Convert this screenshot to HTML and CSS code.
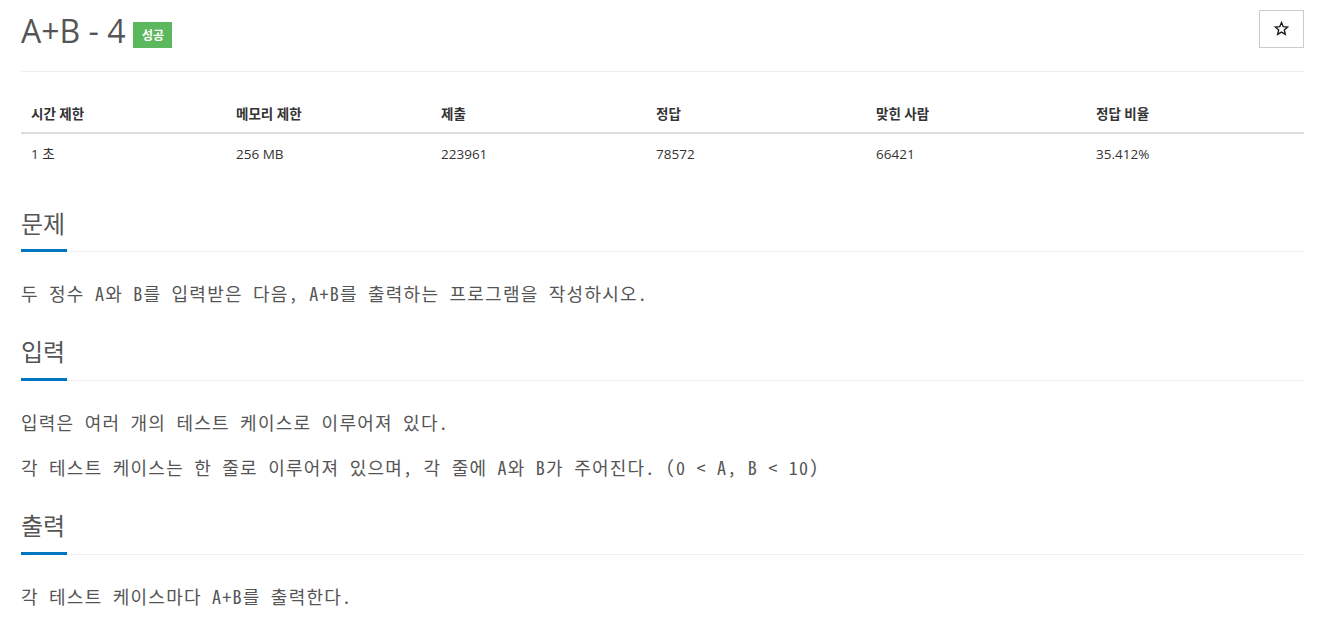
FILE: index.html
```html
<!DOCTYPE html>
<html lang="ko">
<head>
<meta charset="utf-8">
<title>A+B - 4</title>
<link rel="stylesheet" href="styles.css">
</head>
<body>
<div class="container">
  <div class="page-header">
    <h1 class="title"><span class="title-text">A+B - 4</span><span class="badge">성공</span></h1>
    <button class="star-btn" type="button" aria-label="즐겨찾기">
      <svg class="star-icon" width="15" height="15" viewBox="0 0 24 24"><path d="M12 2.5l2.8 6.6 7.1.6-5.4 4.7 1.6 7-6.1-3.7-6.1 3.7 1.6-7-5.4-4.7 7.1-.6z" fill="none" stroke="#1a1a1a" stroke-width="2.2" stroke-linejoin="miter"/></svg>
    </button>
  </div>

  <table class="info">
    <thead>
      <tr>
        <th class="c1">시간 제한</th>
        <th class="c2">메모리 제한</th>
        <th class="c3">제출</th>
        <th class="c4">정답</th>
        <th class="c5">맞힌 사람</th>
        <th class="c6">정답 비율</th>
      </tr>
    </thead>
    <tbody>
      <tr>
        <td>1 초 </td>
        <td>256 MB</td>
        <td>223961</td>
        <td>78572</td>
        <td>66421</td>
        <td>35.412%</td>
      </tr>
    </tbody>
  </table>

  <section class="problem-section">
    <div class="headline"><h2>문제</h2></div>
    <div class="problem-text">
      <p>두 정수 A와 B를 입력받은 다음, A+B를 출력하는 프로그램을 작성하시오.</p>
    </div>
  </section>

  <section class="problem-section">
    <div class="headline"><h2>입력</h2></div>
    <div class="problem-text">
      <p>입력은 여러 개의 테스트 케이스로 이루어져 있다.</p>
      <p>각 테스트 케이스는 한 줄로 이루어져 있으며, 각 줄에 A와 B가 주어진다. (0 &lt; A, B &lt; 10)</p>
    </div>
  </section>

  <section class="problem-section">
    <div class="headline"><h2>출력</h2></div>
    <div class="problem-text">
      <p>각 테스트 케이스마다 A+B를 출력한다.</p>
    </div>
  </section>
</div>
</body>
</html>
```

FILE: styles.css
```css
* { box-sizing: border-box; }

body {
  margin: 0;
  background: #fff;
  color: #333;
  font-family: "Open Sans", "Noto Sans CJK KR", sans-serif;
  font-size: 14px;
}

.container {
  width: 1283px;
  margin-left: 21px;
}

.page-header {
  display: flex;
  justify-content: space-between;
  align-items: flex-start;
  height: 72px;
  border-bottom: 1px solid #eee;
}

.title {
  margin: 13px 0 0 0;
  font-size: 32px;
  font-weight: 400;
  line-height: 1.1;
  color: #555;
  display: flex;
  align-items: center;
}

.badge {
  display: inline-flex;
  align-items: center;
  justify-content: center;
  margin-left: 8px;
  margin-top: 8px;
  width: 39px;
  height: 26px;
  background: #5cb85c;
  color: #fff;
  font-size: 12px;
  font-weight: 700;
  font-family: "Noto Sans CJK KR", sans-serif;
}

.star-btn {
  margin-top: 10px;
  width: 45px;
  height: 38px;
  background: #fff;
  border: 1px solid #ccc;
  padding: 0;
  display: flex;
  align-items: center;
  justify-content: center;
}

.star-icon { display: block; margin-top: -1px; }

.info {
  width: 100%;
  border-collapse: collapse;
  margin-top: 25px;
  margin-bottom: 33px;
}

.info th, .info td {
  text-align: left;
  padding: 8px 8px 8px 10px;
  font-size: 13.5px;
  line-height: 1.43;
}

.info td { padding-top: 11px; color: #333; }

.info th {
  font-weight: 700;
  color: #333;
  border-bottom: 2px solid #ddd;
}

.c1 { width: 205px; }
.c2 { width: 205px; }
.c3 { width: 215px; }
.c4 { width: 220px; }
.c5 { width: 220px; }

.problem-section { margin-bottom: 28px; }

.headline {
  border-bottom: 1px dotted #e3e3e3;
  margin-bottom: 28px;
}

.headline h2 {
  display: inline-block;
  margin: 0 0 -1px 0;
  padding: 4px 0 11px 0;
  font-size: 24px;
  font-weight: 400;
  color: #555;
  line-height: 1.2;
  border-bottom: 3px solid #0076c0;
  min-width: 46px;
}

.problem-text p {
  margin: 0 0 19px 0;
  font-family: "Noto Sans Mono CJK KR", "DejaVu Sans Mono", "Noto Sans CJK KR", monospace;
  font-size: 18px;
  letter-spacing: 1.25px;
  line-height: 26px;
  color: #555;
}
```
